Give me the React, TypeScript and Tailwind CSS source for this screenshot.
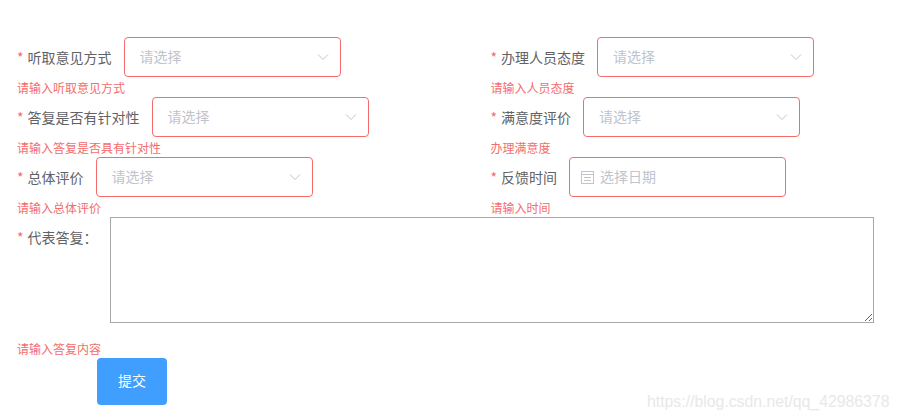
const font = "font-['Noto_Sans_CJK_SC','Noto_Sans',sans-serif]";

function Chevron() {
  return (
    <svg width="14" height="14" viewBox="0 0 14 14" fill="none" stroke="#c0c4cc" strokeWidth="1" className="mr-[10px] shrink-0">
      <path d="M2 4.5 L7 9.5 L12 4.5" />
    </svg>
  );
}

function DateIcon() {
  return (
    <svg width="14" height="14" viewBox="0 0 14 14" fill="none" stroke="#c0c4cc" strokeWidth="1" className="ml-[11px] mr-[5px] shrink-0">
      <rect x="0.5" y="1.5" width="12" height="12" />
      <path d="M0.5 4.5 H12.5 M3 7.5 H10 M3 10.5 H10" />
    </svg>
  );
}

function Field({ label, error, date }: { label: string; error: string; date?: boolean }) {
  return (
    <div>
      <div className="flex items-center h-10">
        <label className="text-sm text-[#606266] pr-3 whitespace-nowrap">
          <span className="text-[#f56c6c] mr-1">*</span>
          {label}
        </label>
        <div className="flex items-center justify-between w-[217px] h-10 border border-[#f56c6c] rounded bg-white">
          {date ? (
            <div className="flex items-center text-sm text-[#c0c4cc]">
              <DateIcon />
              <span className="pb-0.5">选择日期</span>
            </div>
          ) : (
            <>
              <span className="pl-[15px] pb-0.5 text-sm text-[#c0c4cc]">请选择</span>
              <Chevron />
            </>
          )}
        </div>
      </div>
      <p className="h-5 pt-px text-xs leading-5 text-[#f56c6c]">{error}</p>
    </div>
  );
}

export default function App() {
  return (
    <div className={`relative w-[899px] h-[420px] bg-white overflow-hidden pl-[17px] pt-[37px] ${font}`}>
      <div className="grid grid-cols-[473.5px_1fr]">
        <Field label="听取意见方式" error="请输入听取意见方式" />
        <Field label="办理人员态度" error="请输入人员态度" />
        <Field label="答复是否有针对性" error="请输入答复是否具有针对性" />
        <Field label="满意度评价" error="办理满意度" />
        <Field label="总体评价" error="请输入总体评价" />
        <Field label="反馈时间" error="请输入时间" date />
      </div>

      <div className="flex items-start">
        <label className="w-[93px] shrink-0 text-sm leading-10 text-[#606266] whitespace-nowrap">
          <span className="text-[#f56c6c] mr-1">*</span>
          代表答复：
        </label>
        <textarea className="block w-[764px] h-[106px] border border-[#a9a9a9] bg-white outline-none" />
      </div>
      <p className="h-5 mt-[15px] pt-px text-xs leading-5 text-[#f56c6c]">请输入答复内容</p>

      <button className="block ml-[80px] w-[70px] h-[47px] pb-1 rounded bg-[#409eff] text-sm text-white">提交</button>

      <span className="absolute left-[647px] top-[392px] text-[15.8px] leading-5 text-[#e8e8e8] font-['Liberation_Sans',sans-serif]">
        https://blog.csdn.net/qq_42986378
      </span>
    </div>
  );
}
